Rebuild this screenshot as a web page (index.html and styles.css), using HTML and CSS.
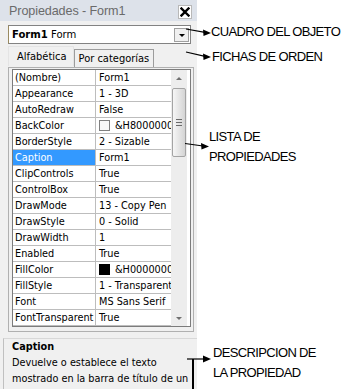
FILE: index.html
```html
<!DOCTYPE html>
<html lang="es">
<head>
<meta charset="utf-8">
<title>Propiedades - Form1</title>
<link rel="stylesheet" href="styles.css">
</head>
<body>
<div class="page">
  <div class="panel">
    <div class="titlebar">
      <span class="title">Propiedades - Form1</span>
      <span class="close"><svg width="10" height="10" viewBox="0 0 10 10"><path d="M1.5 1.5 L8.5 8.5 M8.5 1.5 L1.5 8.5" stroke="#000" stroke-width="2.4" stroke-linecap="square"/></svg></span>
    </div>
    <div class="combo">
      <span class="combo-text"><b>Form1</b> Form</span>
      <span class="combo-btn"><span class="tri-down small"></span></span>
    </div>
    <div class="tabs">
      <span class="tab active">Alfabética</span>
      <span class="tab">Por categorías</span>
    </div>
    <div class="frame">
      <div class="inner">
        <div class="grid">
          <div class="row"><span class="name">(Nombre)</span><span class="val">Form1</span></div>
          <div class="row"><span class="name">Appearance</span><span class="val">1 - 3D</span></div>
          <div class="row"><span class="name">AutoRedraw</span><span class="val">False</span></div>
          <div class="row"><span class="name">BackColor</span><span class="val"><span class="swatch white"></span>&amp;H8000000F&amp;</span></div>
          <div class="row"><span class="name">BorderStyle</span><span class="val">2 - Sizable</span></div>
          <div class="row"><span class="name selected">Caption</span><span class="val">Form1</span></div>
          <div class="row"><span class="name">ClipControls</span><span class="val">True</span></div>
          <div class="row"><span class="name">ControlBox</span><span class="val">True</span></div>
          <div class="row"><span class="name">DrawMode</span><span class="val">13 - Copy Pen</span></div>
          <div class="row"><span class="name">DrawStyle</span><span class="val">0 - Solid</span></div>
          <div class="row"><span class="name">DrawWidth</span><span class="val">1</span></div>
          <div class="row"><span class="name">Enabled</span><span class="val">True</span></div>
          <div class="row"><span class="name">FillColor</span><span class="val"><span class="swatch black"></span>&amp;H00000000&amp;</span></div>
          <div class="row"><span class="name">FillStyle</span><span class="val">1 - Transparent</span></div>
          <div class="row"><span class="name">Font</span><span class="val">MS Sans Serif</span></div>
          <div class="row"><span class="name">FontTransparent</span><span class="val">True</span></div>
        </div>
        <div class="scrollbar">
          <div class="sb-btn"><span class="tri-up"></span></div>
          <div class="thumb"><span class="grip"></span></div>
          <div class="sb-space"></div>
          <div class="sb-btn"><span class="tri-down"></span></div>
        </div>
      </div>
    </div>
    <div class="desc">
      <div class="desc-title">Caption</div>
      <div class="desc-text">Devuelve o establece el texto mostrado en la barra de título de un objeto.</div>
    </div>
  </div>
  <div class="notes">
    <div class="note n1">CUADRO DEL OBJETO</div>
    <div class="note n2">FICHAS DE ORDEN</div>
    <div class="note n3">LISTA DE<br>PROPIEDADES</div>
    <div class="note n4">DESCRIPCION DE<br>LA PROPIEDAD</div>
  </div>
  <svg class="arrows" width="343" height="389" viewBox="0 0 343 389">
    <g stroke="#000" stroke-width="1.2" fill="none">
      <path d="M186 29 L205 32.3"/>
      <path d="M186 52 L205 56.3"/>
      <path d="M185 143.5 L203 146"/>
      <path d="M187 359 L205 359"/>
    </g>
    <path d="M193 359 L193 389" stroke="#000" stroke-width="2"/>
    <g fill="#000">
      <polygon points="211,33 203,29.5 203.5,36"/>
      <polygon points="211,57 203,53.5 203.5,60"/>
      <polygon points="209,146.5 201,143 201.5,149.5"/>
      <polygon points="211,359 203,355.5 203,362.5"/>
    </g>
  </svg>
</div>
</body>
</html>
```
FILE: styles.css
```css
html, body {
  margin: 0;
  padding: 0;
  background: #ffffff;
}
.page {
  position: relative;
  width: 343px;
  height: 389px;
  overflow: hidden;
  display: flex;
  background: #ffffff;
}
.panel {
  width: 197px;
  flex: none;
  background: #f0f0f0;
  display: flex;
  flex-direction: column;
  font-family: "DejaVu Sans Condensed", "DejaVu Sans", sans-serif;
  font-stretch: condensed;
  font-size: 10.8px;
  color: #000;
}
.titlebar {
  height: 21px;
  background: #dde2ea;
  display: flex;
  align-items: center;
  justify-content: space-between;
  padding: 1px 5px 0 9px;
  box-sizing: border-box;
}
.title {
  font-family: "Liberation Sans", Arial, sans-serif;
  font-stretch: normal;
  font-size: 12.6px;
  letter-spacing: -0.1px;
  color: #6a6a6a;
}
.close {
  width: 12px;
  height: 12px;
  background: #ffffff;
  border: 1px solid #b8b8b8;
  display: flex;
  align-items: center;
  justify-content: center;
  margin-top: 2px;
}
.combo {
  margin: 4px 6px 0 8px;
  height: 19px;
  box-sizing: border-box;
  border: 1px solid #828282;
  border-left-color: #9a8a60;
  background: #ffffff;
  display: flex;
  align-items: center;
  justify-content: space-between;
  padding: 0 1px 0 3px;
}
.combo-text {
  font-size: 11.2px;
}
.combo-btn {
  width: 15px;
  height: 14px;
  box-sizing: border-box;
  border: 1px solid #a0a0a0;
  background: #f0f0f0;
  display: flex;
  align-items: center;
  justify-content: center;
}
.tabs {
  display: flex;
  align-items: flex-start;
  height: 23px;
  padding: 2px 0 0 8px;
  box-sizing: border-box;
}
.tab {
  line-height: 18px;
  padding: 0 4px;
  margin-top: 3px;
  border: 1px solid #9c9c9c;
  border-bottom: none;
  background: #f0f0f0;
  font-size: 11px;
}
.tab.active {
  margin-top: 0;
  padding: 0 6px 0 8px;
  border-color: #e4e4e4;
  line-height: 19px;
}
.frame {
  margin-left: 8px;
  width: 186px;
  box-sizing: border-box;
  border: 1px solid #b0b0b0;
  padding: 1px 2px 4px 3px;
  background: #f0f0f0;
}
.inner {
  display: flex;
  border: 1px solid #7c7c7c;
  background: #ffffff;
}
.grid {
  width: 158px;
  flex: none;
}
.row {
  display: grid;
  grid-template-columns: 83px 75px;
  height: 16px;
  box-sizing: border-box;
  border-bottom: 1px solid #bdbdbd;
  line-height: 15px;
}
.name, .val {
  white-space: nowrap;
  overflow: hidden;
  padding-left: 2px;
}
.name {
  border-right: 1px solid #bdbdbd;
}
.val {
  padding-left: 3px;
  display: flex;
  align-items: center;
}
.name.selected {
  background: #3399ff;
  color: #ffffff;
}
.swatch {
  width: 11px;
  height: 11px;
  flex: none;
  box-sizing: border-box;
  border: 1px solid #808080;
  margin-right: 5px;
}
.swatch.white { background: #f8f8f8; }
.swatch.black { background: #000000; border-color: #000; }
.scrollbar {
  width: 16px;
  flex: none;
  background: #ededed;
  display: flex;
  flex-direction: column;
  margin-right: 3px;
}
.sb-btn {
  height: 16px;
  display: flex;
  align-items: center;
  justify-content: center;
}
.thumb {
  margin: 2px 1px 0 1px;
  height: 69px;
  box-sizing: border-box;
  border: 1px solid #a4a4a4;
  border-radius: 2px;
  background: linear-gradient(to right, #f6f6f6, #e2e2e2 60%, #d4d4d4);
  display: flex;
  align-items: center;
  justify-content: center;
}
.grip {
  width: 6px;
  height: 5px;
  border-top: 1px solid #6a6a6a;
  border-bottom: 1px solid #6a6a6a;
  position: relative;
}
.grip::after {
  content: "";
  position: absolute;
  left: 0;
  right: 0;
  top: 2px;
  border-top: 1px solid #6a6a6a;
}
.sb-space { flex: 1; }
.tri-up {
  width: 0;
  height: 0;
  border-left: 3px solid transparent;
  border-right: 3px solid transparent;
  border-bottom: 3px solid #707070;
}
.tri-down {
  width: 0;
  height: 0;
  border-left: 3px solid transparent;
  border-right: 3px solid transparent;
  border-top: 3px solid #707070;
}
.tri-down.small {
  border-top-color: #000;
  margin-top: 2px;
}
.desc {
  flex: 1;
  margin-top: 6px;
  margin-left: 3px;
  border-top: 1px solid #d8d8d8;
  border-left: 1px solid #c0c0c0;
  padding-left: 8px;
  padding-right: 2px;
  line-height: 16px;
  font-size: 10.8px;
  background: #f0f0f0;
  overflow: hidden;
}
.desc-title {
  font-weight: bold;
}
.notes {
  flex: 1;
  padding: 22px 0 0 12px;
  font-family: "Liberation Sans", Arial, sans-serif;
  font-size: 13px;
  letter-spacing: -0.65px;
  line-height: 20px;
  color: #000;
}
.note { white-space: nowrap; }
.n1 { margin-left: 2px; }
.n2 { margin-top: 5px; margin-left: 3px; }
.n3 { margin-top: 60px; }
.n4 { margin-top: 176px; margin-left: 4px; }
.arrows {
  position: absolute;
  left: 0;
  top: 0;
  pointer-events: none;
}
```
